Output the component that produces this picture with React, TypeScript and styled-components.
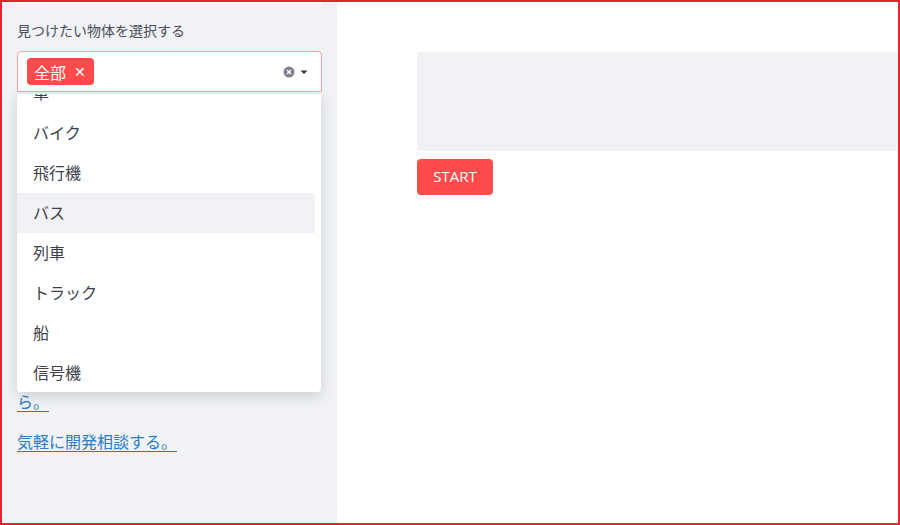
import React from "react";
import styled, { createGlobalStyle } from "styled-components";

const Global = createGlobalStyle`
  html, body { margin: 0; padding: 0; background: #fff; }
  body { font-family: "Liberation Sans", "Noto Sans CJK JP", sans-serif; }
  * { box-sizing: border-box; }
`;

const Frame = styled.div`
  width: 900px;
  height: 525px;
  border: 2px solid #e3262d;
  display: flex;
  overflow: hidden;
`;

const Sidebar = styled.aside`
  position: relative;
  width: 335px;
  flex-shrink: 0;
  background: #f0f2f6;
  padding: 0 15px 0 15px;
  display: flex;
  flex-direction: column;
  color: #31333f;
  font-family: "Noto Sans CJK JP", sans-serif;
`;

const TopStrip = styled.div`
  height: 3px;
  width: 305px;
  background: #fbfbfc;
`;

const Label = styled.div`
  margin-top: 15px;
  font-size: 14px;
  line-height: 20px;
  color: #4a4c57;
`;

const SelectBox = styled.div`
  margin-top: 11px;
  width: 305px;
  height: 41px;
  background: #fff;
  border: 1px solid #f1a3a3;
  border-radius: 4px 4px 0 0;
  display: flex;
  align-items: center;
  padding: 0 10px 0 9px;
`;

const Tag = styled.span`
  display: inline-flex;
  align-items: center;
  height: 27px;
  padding: 0 8px 0 7px;
  gap: 8px;
  background: #ff4b4b;
  color: #fff;
  border-radius: 4px;
  font-size: 16px;
`;

const TagX = styled.span`
  font-family: "DejaVu Sans", sans-serif;
  font-size: 14px;
`;

const Spacer = styled.div`
  flex: 1;
`;

const Icons = styled.div`
  display: flex;
  align-items: center;
  gap: 3px;
  margin-right: 1px;
`;

const Dropdown = styled.div`
  position: absolute;
  left: 15px;
  top: 92px;
  width: 304px;
  height: 298px;
  background: #fff;
  border-radius: 0 0 4px 4px;
  box-shadow: 0 4px 14px rgba(40, 44, 60, 0.18);
  overflow: hidden;
  z-index: 2;
`;

const OptionList = styled.ul`
  list-style: none;
  margin: -21px 6px 0 0;
  padding: 0;
`;

const Option = styled.li<{ $active?: boolean }>`
  height: 40px;
  display: flex;
  align-items: center;
  padding: 0 0 3px 16px;
  font-size: 16px;
  color: #3d3f4a;
  background: ${(p) => (p.$active ? "#f0f2f6" : "transparent")};
`;

const Links = styled.div`
  margin-top: 270px;
  font-size: 16px;
  line-height: 26px;
`;

const Para = styled.p`
  margin: 0 0 14px 0;
`;

const Link = styled.a`
  color: #2b7bc4;
  text-decoration: underline;
  text-underline-offset: 3px;
`;

const Main = styled.main`
  flex: 1;
  background: #fff;
  padding: 50px 0 0 80px;
  overflow: hidden;
`;

const GrayBox = styled.div`
  width: 620px;
  height: 99px;
  background: #f0f2f6;
  border-radius: 4px 0 0 4px;
`;

const StartButton = styled.button`
  margin-top: 8px;
  width: 76px;
  height: 36px;
  border: none;
  border-radius: 4px;
  padding: 0 0 3px 0;
  background: #ff4b4b;
  color: #fff;
  font-family: "Open Sans", "Liberation Sans", sans-serif;
  font-size: 15px;
  cursor: pointer;
`;

const options = ["車", "バイク", "飛行機", "バス", "列車", "トラック", "船", "信号機"];

export default function App() {
  return (
    <>
      <Global />
      <Frame>
        <Sidebar>
          <TopStrip />
          <Label>見つけたい物体を選択する</Label>
          <SelectBox>
            <Tag>
              全部<TagX>✕</TagX>
            </Tag>
            <Spacer />
            <Icons>
              <svg width="12" height="12" viewBox="0 0 12 12">
                <circle cx="6" cy="6" r="5.5" fill="#80838f" />
                <path d="M4 4 L8 8 M8 4 L4 8" stroke="#fff" strokeWidth="1.3" />
              </svg>
              <svg width="12" height="12" viewBox="0 0 12 12">
                <path d="M2.5 4.5 L9.5 4.5 L6 8 Z" fill="#31333f" />
              </svg>
            </Icons>
          </SelectBox>
          <Dropdown>
            <OptionList>
              {options.map((o) => (
                <Option key={o} $active={o === "バス"}>
                  {o}
                </Option>
              ))}
            </OptionList>
          </Dropdown>
          <Links>
            <Para>
              <Link href="#">
                使い方の詳細はこち
                <br />
                ら。
              </Link>
            </Para>
            <Para>
              <Link href="#">気軽に開発相談する。</Link>
            </Para>
          </Links>
        </Sidebar>
        <Main>
          <GrayBox />
          <StartButton>START</StartButton>
        </Main>
      </Frame>
    </>
  );
}
